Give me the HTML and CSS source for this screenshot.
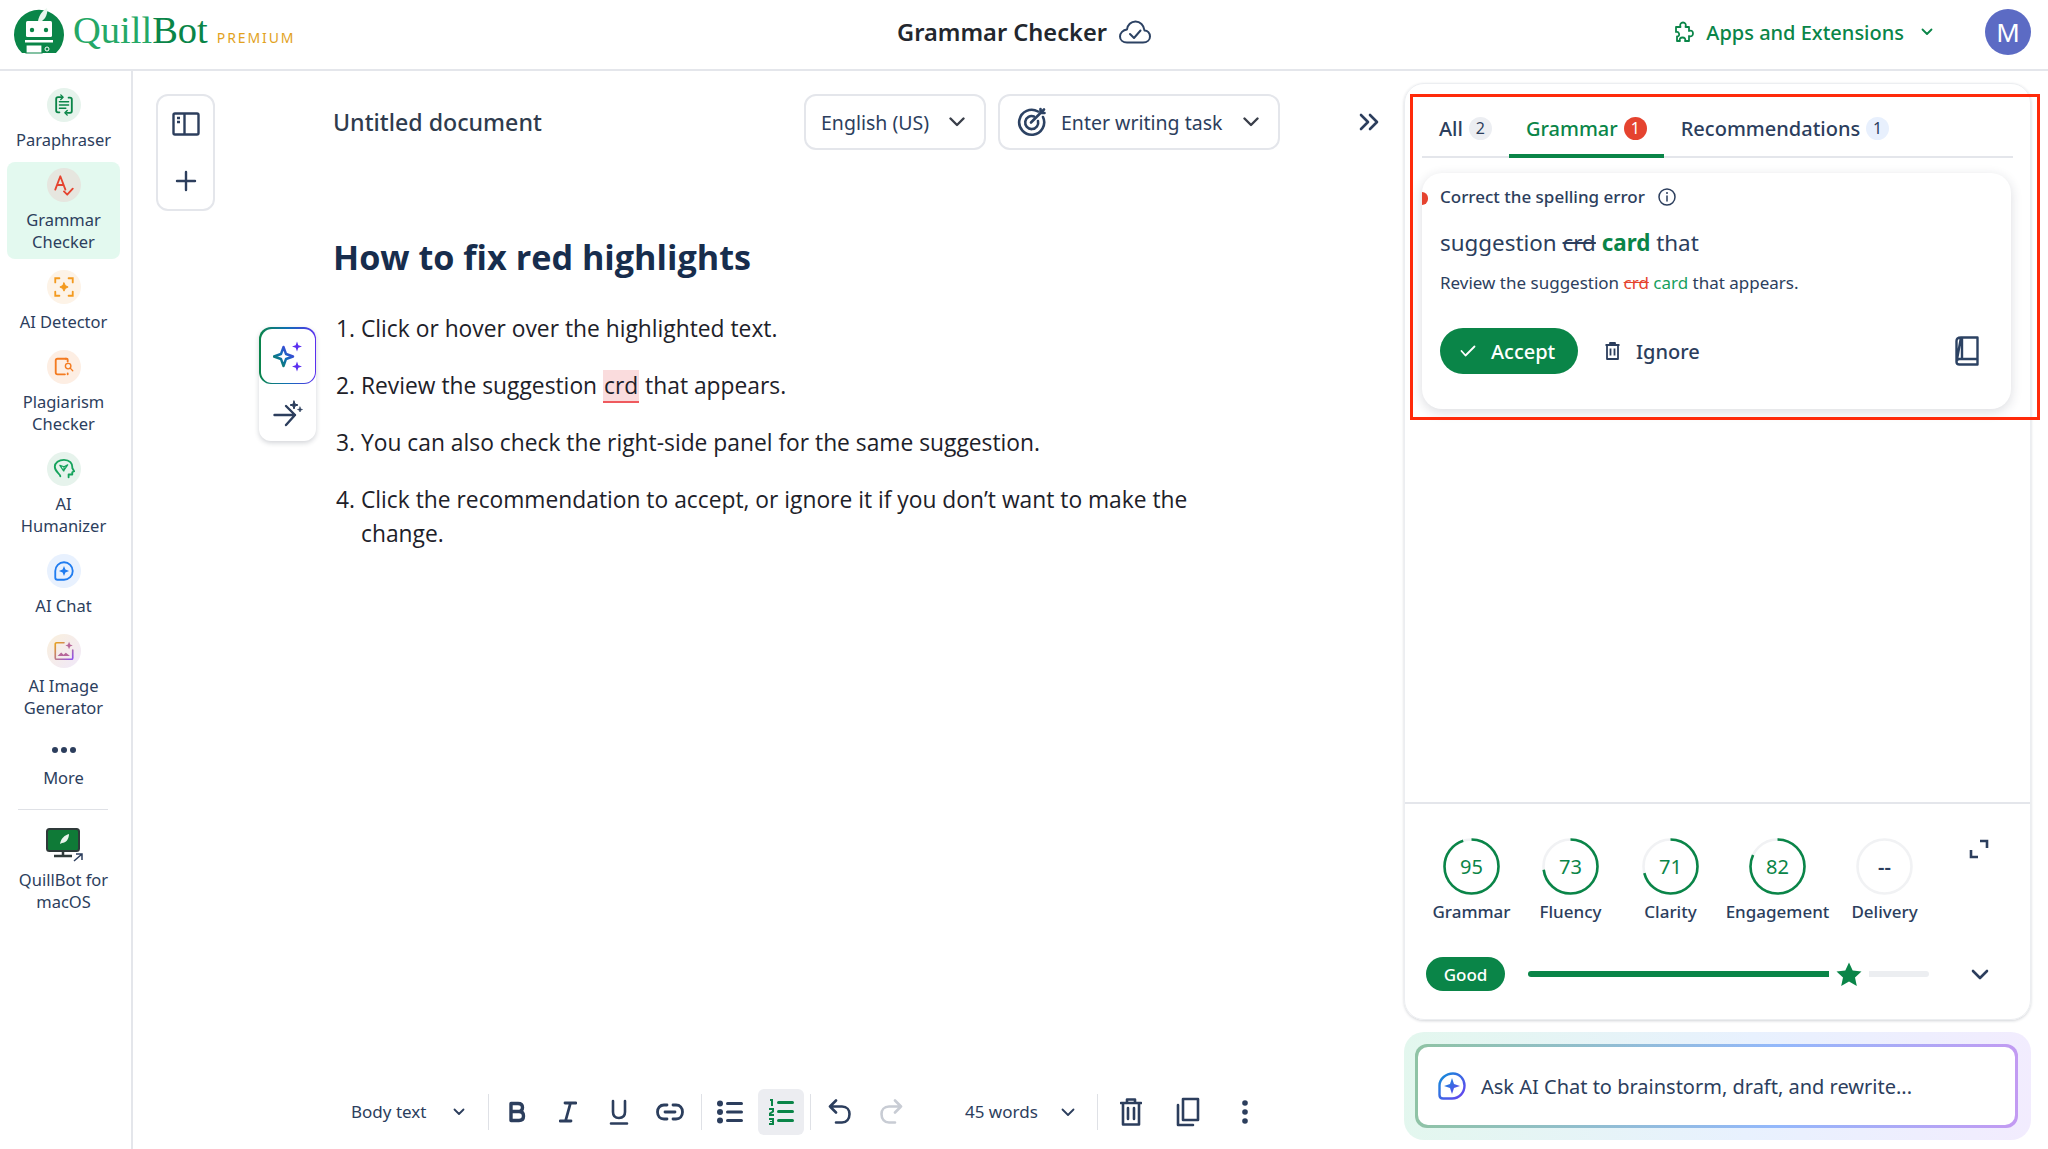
FILE: index.html
```html
<!DOCTYPE html>
<html lang="en">

<head>
    <meta charset="UTF-8">
    <meta name="viewport" content="width=device-width, initial-scale=1.0">
    <title>QuillBot Grammar Checker</title>
    <link rel="stylesheet" href="styles.css">
</head>

<body>
    <svg class="defs" width="0" height="0" aria-hidden="true">
        <defs>
            <linearGradient id="spark" x1="0" y1="1" x2="1" y2="0">
                <stop offset="0" stop-color="#0a8548" />
                <stop offset=".5" stop-color="#0f6fb5" />
                <stop offset="1" stop-color="#5b2ff0" />
            </linearGradient>
            <linearGradient id="imageGrad" x1="0" y1="0" x2="1" y2="1">
                <stop offset="0" stop-color="#e8a21c" />
                <stop offset="1" stop-color="#8f4ff0" />
            </linearGradient>
            <linearGradient id="chatGrad" x1="0" y1="0" x2="1" y2="1">
                <stop offset="0" stop-color="#0f8fd8" />
                <stop offset="1" stop-color="#6a3ff0" />
            </linearGradient>
        </defs>
    </svg>

    <!-- Header -->
    <header class="header">
        <div class="brand">
            <svg class="brand-mark" width="52" height="58" viewBox="0 0 52 58">
                <path d="M9 47A25 25 0 1 1 43 47Z" fill="#0a8548" />
                <path d="M25 15C26 9 30 4 34 2C35 7 33 12 29 15Z" fill="#e8f5ec" />
                <rect x="13" y="15" width="26" height="16" rx="1.500" fill="#fff" />
                <circle cx="19" cy="24" r="2.200" fill="#0a8548" />
                <circle cx="33" cy="24" r="2.200" fill="#0a8548" />
                <rect x="12" y="34" width="28" height="2.500" fill="#fff" />
                <path d="M13 39H29V47H13Z" fill="#fff" stroke="#0a8548" stroke-width="1.200" />
                <circle cx="34" cy="43" r="2" fill="#0a8548" stroke="#fff" stroke-width="1" />
            </svg>
            <span class="brand-name"><span class="brand-quill">Quill</span><span class="brand-bot">Bot</span></span>
            <span class="brand-tier">PREMIUM</span>
        </div>
        <div class="page-title">
            <span>Grammar Checker</span>
            <svg width="32" height="24" viewBox="0 0 32 24" fill="none" stroke="#2c4263" stroke-width="2" stroke-linecap="round" stroke-linejoin="round">
                <path d="M8 22.500H24C28 22.500 31 20 31 16.500C31 13 28.500 10.500 25.500 10.500C25 5 21 1.500 16.500 1.500C12 1.500 8.500 5 8 9.500C4 10 1 13 1 16.500C1 20 4 22.500 8 22.500Z" />
                <path d="M11 14L15 18L21.500 10.500" />
            </svg>
        </div>
        <div class="header-right">
            <a class="apps-link">
                <svg width="20" height="22" viewBox="0 0 20 22" fill="none" stroke="#0a8548" stroke-width="1.800" stroke-linejoin="round">
                    <path d="M2 6H6.500C5.500 3 7 1.500 9 1.500C11 1.500 12.500 3 11.500 6H15V10C18 9 19 10.500 19 12.500C19 14.500 17.500 16 15 15V20H11C12 17.500 10.500 16.500 8.500 16.500C6.500 16.500 5 17.500 6 20H3V15.500C5 15.500 5.500 14 5 12.500C4.500 11 3.500 10.500 2 11Z" />
                </svg>
                <span>Apps and Extensions</span>
                <svg class="apps-caret" width="12" height="8" viewBox="0 0 12 8" fill="none" stroke="#0a8548" stroke-width="1.800" stroke-linecap="round" stroke-linejoin="round">
                    <path d="M1.500 1.500L6 6L10.500 1.500" />
                </svg>
            </a>
            <div class="avatar">M</div>
        </div>
    </header>

    <div class="main">
        <!-- Sidebar -->
        <nav class="sidebar">
            <a class="nav-item">
                <span class="nav-icon tint-green">
                    <svg width="20" height="24" viewBox="0 0 20 24" fill="none" stroke="#0a8548" stroke-width="2" stroke-linecap="round" stroke-linejoin="round">
                        <path d="M7 3.500H3.500Q1.500 3.500 1.500 5.500V18Q1.500 20 3.500 20H5" />
                        <path d="M13 20.500H16.500Q18.500 20.500 18.500 18.500V6Q18.500 4 16.500 4H15" />
                        <path d="M5 8.500H15M5 12H15M5 15.500H12" stroke-width="1.500" />
                        <path d="M6.500 1L9 3.500L6.500 6M13.500 18L11 20.500L13.500 23" stroke-width="1.500" />
                    </svg>
                </span>
                <span class="nav-label">Paraphraser</span>
            </a>
            <a class="nav-item active">
                <span class="nav-icon tint-red">
                    <svg width="22" height="24" viewBox="0 0 22 24" fill="none" stroke="#e5432f" stroke-width="2" stroke-linecap="round" stroke-linejoin="round">
                        <path d="M1.500 17L7 2.500L12.500 17M3.500 12H10.500" />
                        <path d="M11 19L14.500 22.500L20.500 16" />
                    </svg>
                </span>
                <span class="nav-label">Grammar Checker</span>
            </a>
            <a class="nav-item">
                <span class="nav-icon tint-orange">
                    <svg width="22" height="22" viewBox="0 0 22 22" fill="none" stroke="#f39a1f" stroke-width="2" stroke-linecap="round">
                        <path d="M1.500 6V1.500H6M16 1.500H20.500V6M20.500 16V20.500H16M6 20.500H1.500V16" />
                        <path d="M11 6.500L12.500 9.500L15.500 11L12.500 12.500L11 15.500L9.500 12.500L6.500 11L9.500 9.500Z" fill="#f39a1f" stroke-width="1" />
                    </svg>
                </span>
                <span class="nav-label">AI Detector</span>
            </a>
            <a class="nav-item">
                <span class="nav-icon tint-peach">
                    <svg width="22" height="22" viewBox="0 0 22 22" fill="none" stroke="#f47b20" stroke-width="2" stroke-linecap="round" stroke-linejoin="round">
                        <path d="M13 2H4Q2 2 2 4V17Q2 19 4 19H12" />
                        <path d="M13 2H14Q15 2 15 3V5M15 18V19" />
                        <circle cx="15.500" cy="10" r="3" stroke-width="1.500" />
                        <path d="M18 12.500L20.500 15" stroke-width="1.500" />
                    </svg>
                </span>
                <span class="nav-label">Plagiarism Checker</span>
            </a>
            <a class="nav-item">
                <span class="nav-icon tint-green">
                    <svg width="24" height="24" viewBox="0 0 24 24" fill="none" stroke="#15a35c" stroke-width="2" stroke-linecap="round" stroke-linejoin="round">
                        <path d="M8 20C8 17 2 15 2 9.500C2 5 6.500 2 12 2C18 2 21.500 6 21 11L23 14.500L21 15.500V18H17V21" />
                        <path d="M7.500 8L12 9.500L16 7.500M7.500 8L11.500 14M16 7.500L11.500 14M12 9.500V14" stroke-width="1.300" />
                    </svg>
                </span>
                <span class="nav-label">AI Humanizer</span>
            </a>
            <a class="nav-item">
                <span class="nav-icon tint-blue">
                    <svg width="22" height="22" viewBox="0 0 22 22" fill="none">
                        <path d="M11 1.500C16.300 1.500 20.500 5.700 20.500 11C20.500 16.300 16.300 20.500 11 20.500H4Q1.500 20.500 1.500 18V11C1.500 5.700 5.700 1.500 11 1.500Z" stroke="#1f7cf0" stroke-width="2" />
                        <path d="M11 5.500L12.500 9.500L16.500 11L12.500 12.500L11 16.500L9.500 12.500L5.500 11L9.500 9.500Z" fill="#1f7cf0" />
                    </svg>
                </span>
                <span class="nav-label">AI Chat</span>
            </a>
            <a class="nav-item">
                <span class="nav-icon tint-image">
                    <svg width="22" height="22" viewBox="0 0 22 22" fill="none" stroke="url(#imageGrad)" stroke-width="1.800" stroke-linecap="round" stroke-linejoin="round">
                        <path d="M11 2H3Q1.500 2 1.500 3.500V18.500Q1.500 20 3 20H19Q20.500 20 20.500 18.500V10" />
                        <path d="M4 16.500L8 12.500L10.500 15L13 13L17.500 16.500Z" fill="#b7679a" stroke="none" />
                        <path d="M16.500 1L17.700 3.800L20.500 5L17.700 6.200L16.500 9L15.300 6.200L12.500 5L15.300 3.800Z" fill="#b7679a" stroke="none" />
                    </svg>
                </span>
                <span class="nav-label">AI Image Generator</span>
            </a>
            <a class="nav-item more">
                <span class="more-dots"><i></i><i></i><i></i></span>
                <span class="nav-label">More</span>
            </a>
            <div class="nav-divider"></div>
            <a class="nav-item desktop">
                <svg class="desktop-icon" width="38" height="34" viewBox="0 0 38 34" fill="none">
                    <rect x="1" y="1" width="32" height="22" rx="2.500" fill="#0f7a37" stroke="#2f3a3a" stroke-width="2" />
                    <path d="M14 16C15 10 19 7 23 6C23 11 20 15 16 15Z" fill="#e8f5ec" />
                    <path d="M8 28H26M17 23V28" stroke="#2f3a3a" stroke-width="2.500" />
                    <path d="M28 33L36 26M30 26H36V32" stroke="#2c3e5d" stroke-width="1.500" />
                </svg>
                <span class="nav-label">QuillBot for macOS</span>
            </a>
        </nav>

        <!-- Left rail -->
        <div class="rail">
            <button class="rail-btn">
                <svg width="28" height="24" viewBox="0 0 28 24" fill="none" stroke="#2c3e5d" stroke-width="2.400" stroke-linejoin="round">
                    <rect x="1.500" y="1.500" width="25" height="21" rx="1.500" />
                    <path d="M12.500 1.500V22.500" />
                    <path d="M5 6H8M5 10H8" stroke-width="2.400" />
                </svg>
            </button>
            <button class="rail-btn">
                <svg width="22" height="22" viewBox="0 0 22 22" fill="none" stroke="#2c3e5d" stroke-width="2.400" stroke-linecap="round">
                    <path d="M11 2V20M2 11H20" />
                </svg>
            </button>
        </div>

        <!-- Floating writing tools -->
        <div class="ai-tools">
            <div class="ai-tool-active">
                <div class="ai-tool-inner">
                    <svg width="30" height="32" viewBox="0 0 30 32" fill="none">
                        <path d="M10.500 7L13 14L20 16.500L13 19L10.500 26L8 19L1 16.500L8 14Z" stroke="url(#spark)" stroke-width="2.400" stroke-linejoin="round" />
                        <path d="M24 1.500L25.300 5.200L29 6.500L25.300 7.800L24 11.500L22.700 7.800L19 6.500L22.700 5.200Z" fill="#5b2ff0" />
                        <path d="M24 21.500L25.300 25.200L29 26.500L25.300 27.800L24 31.500L22.700 27.800L19 26.500L22.700 25.200Z" fill="#5b2ff0" />
                    </svg>
                </div>
            </div>
            <div class="ai-tool">
                <svg width="30" height="30" viewBox="0 0 30 30" fill="none" stroke="#2c3e5d" stroke-width="2.400" stroke-linecap="round" stroke-linejoin="round">
                    <path d="M1.500 17H22M13 8L22 17L13 27" />
                    <path d="M21 3L22 6L25 7L22 8L21 11L20 8L17 7L20 6Z" fill="#2c3e5d" stroke-width="1" />
                    <path d="M27 9L27.700 11L29.500 11.500L27.700 12.200L27 14L26.300 12.200L24.500 11.500L26.300 11Z" fill="#2c3e5d" stroke-width=".6" />
                </svg>
            </div>
        </div>

        <!-- Editor -->
        <main class="editor">
            <div class="editor-top">
                <div class="doc-name">Untitled document</div>
                <button class="select-box lang">
                    <span>English (US)</span>
                    <svg class="caret" width="16" height="10" viewBox="0 0 16 10" fill="none" stroke="#3a3f4a" stroke-width="2.400" stroke-linecap="round" stroke-linejoin="round">
                        <path d="M1.500 1.500L8 8L14.500 1.500" />
                    </svg>
                </button>
                <button class="select-box task">
                    <svg width="30" height="30" viewBox="0 0 30 30" fill="none" stroke="#2c4263" stroke-width="2.600" stroke-linecap="round">
                        <path d="M21 4.500A12.500 12.500 0 1 0 26 10" />
                        <path d="M17 9.500A6.500 6.500 0 1 0 21 14" />
                        <path d="M14 15.500L27 2.500M23.500 2V6L27.500 6" stroke-linejoin="round" />
                    </svg>
                    <span>Enter writing task</span>
                    <svg class="caret" width="16" height="10" viewBox="0 0 16 10" fill="none" stroke="#3a3f4a" stroke-width="2.400" stroke-linecap="round" stroke-linejoin="round">
                        <path d="M1.500 1.500L8 8L14.500 1.500" />
                    </svg>
                </button>
                <svg class="collapse" width="20" height="18" viewBox="0 0 20 18" fill="none" stroke="#2c3e5d" stroke-width="2.600" stroke-linecap="round" stroke-linejoin="round">
                    <path d="M2 2L9 9L2 16M11 2L18 9L11 16" />
                </svg>
            </div>

            <div class="doc">
                <h1>How to fix red highlights</h1>
                <ol>
                    <li>Click or hover over the highlighted text.</li>
                    <li>Review the suggestion <span class="flagged">crd</span> that appears.</li>
                    <li>You can also check the right-side panel for the same suggestion.</li>
                    <li>Click the recommendation to accept, or ignore it if you don’t want to make the change.</li>
                </ol>
            </div>

            <div class="toolbar">
                <div class="tb-select body-style">
                    <span>Body text</span>
                    <svg width="12" height="8" viewBox="0 0 12 8" fill="none" stroke="#2c3e5d" stroke-width="1.800" stroke-linecap="round" stroke-linejoin="round"><path d="M1.500 1.500L6 6L10.500 1.500" /></svg>
                </div>
                <div class="tb-sep"></div>
                <button class="tb-btn">
                    <svg width="18" height="22" viewBox="0 0 18 22" fill="none" stroke="#2c3e5d" stroke-width="3.400" stroke-linejoin="round"><path d="M3 2.500H10C13 2.500 14.500 4 14.500 6.500C14.500 9 13 10.500 10 10.500H3ZM3 10.500H11C14 10.500 15.500 12.500 15.500 15C15.500 17.500 14 19.500 11 19.500H3Z" /></svg>
                </button>
                <button class="tb-btn">
                    <svg width="18" height="22" viewBox="0 0 18 22" fill="none" stroke="#2c3e5d" stroke-width="2.800" stroke-linecap="round"><path d="M6 2H17M1 20H12M11.500 2L6.500 20" /></svg>
                </button>
                <button class="tb-btn">
                    <svg width="20" height="26" viewBox="0 0 20 26" fill="none" stroke="#2c3e5d" stroke-width="2.600" stroke-linecap="round"><path d="M4 2V13C4 17 6.500 19 10 19C13.500 19 16 17 16 13V2M2 24.500H18" /></svg>
                </button>
                <button class="tb-btn">
                    <svg width="28" height="18" viewBox="0 0 28 18" fill="none" stroke="#2c3e5d" stroke-width="2.800" stroke-linecap="round"><path d="M11 2H8C4 2 1.500 5 1.500 9C1.500 13 4 16 8 16H11M17 2H20C24 2 26.500 5 26.500 9C26.500 13 24 16 20 16H17M9 9H19" /></svg>
                </button>
                <div class="tb-sep sep-b"></div>
                <button class="tb-btn">
                    <svg width="26" height="24" viewBox="0 0 26 24" fill="#2c3e5d"><circle cx="3" cy="3.500" r="3" /><circle cx="3" cy="12" r="3" /><circle cx="3" cy="20.500" r="3" /><rect x="9" y="2" width="17" height="3" rx="1.500" /><rect x="9" y="10.500" width="17" height="3" rx="1.500" /><rect x="9" y="19" width="17" height="3" rx="1.500" /></svg>
                </button>
                <button class="tb-btn on">
                    <svg width="26" height="28" viewBox="0 0 26 28" fill="#0a8548"><rect x="9" y="3" width="17" height="3" rx="1.500" /><rect x="9" y="12" width="17" height="3" rx="1.500" /><rect x="9" y="21" width="17" height="3" rx="1.500" /><path d="M2 1H5V8H3V3H2ZM1 10H6V14L3 16H6V18H1V15L4 13V12H1ZM1 20H6V27H1V25H4V24H2V23H4V22H1Z" /></svg>
                </button>
                <div class="tb-sep sep-c"></div>
                <button class="tb-btn">
                    <svg width="24" height="26" viewBox="0 0 24 26" fill="none" stroke="#2c3e5d" stroke-width="2.600" stroke-linecap="round" stroke-linejoin="round"><path d="M8 1.500L2 7.500L8 13.500M2 7.500H14C19 7.500 21.500 11 21.500 15C21.500 20 18.500 23.500 14 23.500H8" /></svg>
                </button>
                <button class="tb-btn">
                    <svg width="24" height="26" viewBox="0 0 24 26" fill="none" stroke="#c8ccd4" stroke-width="2.600" stroke-linecap="round" stroke-linejoin="round"><path d="M16 1.500L22 7.500L16 13.500M22 7.500H10C5 7.500 2.500 11 2.500 15C2.500 20 5.500 23.500 10 23.500H16" /></svg>
                </button>
                <div class="tb-select word-count">
                    <span>45 words</span>
                    <svg width="14" height="9" viewBox="0 0 14 9" fill="none" stroke="#2c3e5d" stroke-width="1.800" stroke-linecap="round" stroke-linejoin="round"><path d="M1.500 1.500L7 7L12.500 1.500" /></svg>
                </div>
                <div class="tb-sep sep-d"></div>
                <div class="tb-end">
                    <button class="tb-btn">
                        <svg width="22" height="28" viewBox="0 0 22 28" fill="none" stroke="#2c3e5d" stroke-width="2.600" stroke-linecap="round" stroke-linejoin="round"><path d="M1 5H21M7 4V1.500H15V4M3 5V26.500H19V5M8 10V21M14 10V21" /></svg>
                    </button>
                    <button class="tb-btn">
                        <svg width="24" height="30" viewBox="0 0 24 30" fill="none" stroke="#2c3e5d" stroke-width="2.600" stroke-linecap="round" stroke-linejoin="round"><path d="M7 2H22V23H7ZM2 8V28H17" /></svg>
                    </button>
                    <button class="tb-btn">
                        <svg width="6" height="24" viewBox="0 0 6 24" fill="#2c3e5d"><circle cx="3" cy="3" r="2.800" /><circle cx="3" cy="12" r="2.800" /><circle cx="3" cy="21" r="2.800" /></svg>
                    </button>
                </div>
            </div>
        </main>

        <!-- Right panel -->
        <aside class="panel">
            <div class="panel-card">
                <div class="tabs">
                    <div class="tab"><span>All</span><span class="count grey">2</span></div>
                    <div class="tab selected"><span>Grammar</span><span class="count red">1</span></div>
                    <div class="tab"><span>Recommendations</span><span class="count pale">1</span></div>
                </div>

                <div class="suggestion">
                    <i class="suggestion-dot"></i>
                    <div class="suggestion-head">
                        <span>Correct the spelling error</span>
                        <svg width="18" height="18" viewBox="0 0 18 18" fill="none" stroke="#2c3e5d" stroke-width="1.500" stroke-linecap="round"><circle cx="9" cy="9" r="8" /><path d="M9 8V13" /><path d="M9 5V5.100" stroke-width="2" /></svg>
                    </div>
                    <div class="suggestion-text">suggestion <s>crd</s> <b>card</b> that</div>
                    <div class="suggestion-note">Review the suggestion <s>crd</s> <span>card</span> that appears.</div>
                    <div class="suggestion-actions">
                        <button class="accept">
                            <svg width="16" height="12" viewBox="0 0 16 12" fill="none" stroke="#fff" stroke-width="1.800" stroke-linecap="round" stroke-linejoin="round"><path d="M1.500 6L5.500 10.500L14.500 1.500" /></svg>
                            <span>Accept</span>
                        </button>
                        <button class="ignore">
                            <svg width="15" height="18" viewBox="0 0 15 18" fill="none" stroke="#2c3e5d" stroke-width="1.800" stroke-linejoin="round"><path d="M.5 3H14.500M5 3V1H10V3M2 3V17H13V3M5.500 6.500V13.500M9.500 6.500V13.500" /></svg>
                            <span>Ignore</span>
                        </button>
                        <svg class="book" width="24" height="30" viewBox="0 0 24 30" fill="none" stroke="#2c4263" stroke-width="2.400" stroke-linejoin="round"><path d="M6 1.500H22.500V23H4.500C2.500 23 1.500 24.500 1.500 26C1.500 27.500 2.500 28.500 4.500 28.500H22.500V23M1.500 26V5C1.500 3 3 1.500 6 1.500ZM7 1.500V23" /></svg>
                    </div>
                </div>

                <div class="score-area">
                    <div class="score-top">
                        <div class="scores">
                            <div class="score">
                                <div class="ring">
                                    <svg width="57" height="57" viewBox="0 0 57 57" fill="none" stroke-width="2.600"><circle class="ring-base" cx="28.500" cy="28.500" r="27" /><circle class="ring-fill" cx="28.500" cy="28.500" r="27" pathLength="100" stroke-dasharray="95 100" /></svg>
                                    <span>95</span>
                                </div>
                                <div class="score-label">Grammar</div>
                            </div>
                            <div class="score">
                                <div class="ring">
                                    <svg width="57" height="57" viewBox="0 0 57 57" fill="none" stroke-width="2.600"><circle class="ring-base" cx="28.500" cy="28.500" r="27" /><circle class="ring-fill" cx="28.500" cy="28.500" r="27" pathLength="100" stroke-dasharray="73 100" /></svg>
                                    <span>73</span>
                                </div>
                                <div class="score-label">Fluency</div>
                            </div>
                            <div class="score">
                                <div class="ring">
                                    <svg width="57" height="57" viewBox="0 0 57 57" fill="none" stroke-width="2.600"><circle class="ring-base" cx="28.500" cy="28.500" r="27" /><circle class="ring-fill" cx="28.500" cy="28.500" r="27" pathLength="100" stroke-dasharray="71 100" /></svg>
                                    <span>71</span>
                                </div>
                                <div class="score-label">Clarity</div>
                            </div>
                            <div class="score">
                                <div class="ring">
                                    <svg width="57" height="57" viewBox="0 0 57 57" fill="none" stroke-width="2.600"><circle class="ring-base" cx="28.500" cy="28.500" r="27" /><circle class="ring-fill" cx="28.500" cy="28.500" r="27" pathLength="100" stroke-dasharray="82 100" /></svg>
                                    <span>82</span>
                                </div>
                                <div class="score-label">Engagement</div>
                            </div>
                            <div class="score">
                                <div class="ring empty">
                                    <svg width="57" height="57" viewBox="0 0 57 57" fill="none" stroke-width="2.600"><circle class="ring-base" cx="28.500" cy="28.500" r="27" /></svg>
                                    <span>--</span>
                                </div>
                                <div class="score-label">Delivery</div>
                            </div>
                        </div>
                        <svg class="expand" width="20" height="20" viewBox="0 0 20 20" fill="none" stroke="#2c3e5d" stroke-width="2.600"><path d="M11 2H18V9M2 11V18H9" /></svg>
                    </div>
                    <div class="overall">
                        <span class="overall-pill">Good</span>
                        <div class="overall-bar"><i></i></div>
                        <svg class="overall-star" width="26" height="24" viewBox="0 0 26 24" fill="#0a8548"><path d="M13 .5L16.700 8.500L25.500 9.500L19 15.400L20.800 24L13 19.600L5.200 24L7 15.400L.5 9.500L9.300 8.500Z" /></svg>
                        <div class="overall-rest"></div>
                        <svg class="overall-caret" width="18" height="11" viewBox="0 0 18 11" fill="none" stroke="#2c3e5d" stroke-width="2.600" stroke-linecap="round" stroke-linejoin="round"><path d="M2 2L9 9L16 2" /></svg>
                    </div>
                </div>
            </div>

            <div class="chat-wrap">
                <div class="chat-box">
                    <div class="chat-inner">
                        <svg width="28" height="28" viewBox="0 0 28 28" fill="none">
                            <path d="M15 1.500C21.500 1.500 26.500 6.800 26.500 13.500C26.500 20.500 21.500 26.500 14 26.500H5Q1.500 26.500 1.500 23V13.500C1.500 6.800 8 1.500 15 1.500Z" stroke="url(#chatGrad)" stroke-width="2.400" />
                            <path d="M14 6L16 12L22 14L16 16L14 22L12 16L6 14L12 12Z" fill="url(#chatGrad)" />
                        </svg>
                        <span>Ask AI Chat to brainstorm, draft, and rewrite...</span>
                    </div>
                </div>
            </div>

            <!-- screenshot annotation -->
            <div class="callout"></div>
        </aside>
    </div>
</body>

</html>
```

FILE: styles.css
```css
/* General Styling */
* {
    box-sizing: border-box;
}

body {
    font-family: "Noto Sans", "Open Sans", Arial, sans-serif;
    background-color: #fff;
    color: #2c3e5d;
    margin: 0;
    height: 100vh;
    overflow: hidden;
    display: flex;
    flex-direction: column;
}

button {
    font-family: inherit;
    background: none;
    border: none;
    padding: 0;
    color: inherit;
}

svg {
    flex-shrink: 0;
    display: block;
}

.defs {
    position: absolute;
}

/* Header */
.header {
    height: 71px;
    flex-shrink: 0;
    padding-bottom: 5px;
    display: grid;
    grid-template-columns: 1fr auto 1fr;
    align-items: center;
    border-bottom: 2px solid #e4e6eb;
}

.brand {
    display: flex;
    align-items: center;
    padding-left: 13px;
}

.brand-mark {
    margin-top: 5px;
}

.brand-name {
    font-family: "Liberation Serif", serif;
    font-size: 38.500px;
    margin-left: 8px;
    line-height: 1;
    margin-top: -3px;
}

.brand-quill {
    color: #24a866;
}

.brand-bot {
    color: #0a8548;
}

.brand-tier {
    color: #e2a21d;
    font-size: 14px;
    letter-spacing: 1.900px;
    margin-left: 9px;
    margin-top: 10px;
}

.page-title {
    display: flex;
    align-items: center;
    gap: 12px;
    font-size: 23.600px;
    font-weight: 600;
    color: #23272e;
}

.header-right {
    display: flex;
    align-items: center;
    justify-content: flex-end;
    padding-right: 17px;
}

.apps-link {
    display: flex;
    align-items: center;
    color: #0a8548;
    font-size: 20px;
    font-weight: 500;
}

.apps-link span {
    margin-left: 12px;
}

.apps-caret {
    margin-left: 17px;
}

.avatar {
    width: 46px;
    height: 46px;
    border-radius: 50%;
    background-color: #5c6bc4;
    color: #fff;
    font-size: 26px;
    display: flex;
    align-items: center;
    justify-content: center;
    margin-left: 52px;
}

/* Layout */
.main {
    flex: 1;
    display: flex;
    min-height: 0;
    position: relative;
}

/* Sidebar */
.sidebar {
    width: 133px;
    flex-shrink: 0;
    border-right: 2px solid #e4e6eb;
    padding: 11px 11px 0 7px;
    display: flex;
    flex-direction: column;
    gap: 5px;
}

.nav-item {
    display: flex;
    flex-direction: column;
    align-items: center;
    gap: 7px;
    padding: 6px 0;
    border-radius: 8px;
}

.nav-item.active {
    background-color: #e3f9ef;
}

.nav-icon {
    width: 34px;
    height: 34px;
    border-radius: 50%;
    display: flex;
    align-items: center;
    justify-content: center;
}

.nav-icon svg {
    transform: scale(.92);
}

.tint-green { background-color: #e6f3ec; }
.tint-red { background-color: #e6e6df; }
.tint-orange { background-color: #fdf3e7; }
.tint-peach { background-color: #fdeee3; }
.tint-blue { background-color: #e8f1fe; }
.tint-image { background: linear-gradient(135deg, #faf0dc, #f0e8fa); }

.nav-label {
    font-size: 16.500px;
    line-height: 22px;
    text-align: center;
    color: #2c3e5d;
    width: 100px;
}

.more {
    gap: 5px;
    margin-top: 2px;
}

.more-dots {
    height: 24px;
    display: flex;
    align-items: center;
    gap: 3px;
}

.more-dots i {
    width: 6px;
    height: 6px;
    border-radius: 50%;
    background-color: #2c3e5d;
}

.nav-divider {
    height: 1px;
    background-color: #dfe1e6;
    margin: 9px 12px 0 11px;
}

.desktop {
    margin-top: 7px;
    gap: 7px;
    padding-top: 6px;
}

.desktop-icon {
    margin-left: 3px;
}

/* Left rail */
.rail {
    width: 59px;
    height: 117px;
    flex-shrink: 0;
    margin: 23px 0 0 23px;
    border: 2px solid #e4e6eb;
    border-radius: 12px;
    display: flex;
    flex-direction: column;
    justify-content: space-around;
    align-items: center;
}

.rail-btn {
    height: 44px;
    display: flex;
    align-items: center;
}

/* Floating AI tools */
.ai-tools {
    width: 57px;
    height: 114px;
    flex-shrink: 0;
    margin: 256px 0 0 44px;
    border-radius: 12px;
    box-shadow: 0 2px 5px rgba(30, 40, 60, 0.2);
    background-color: #fff;
}

.ai-tool-active {
    height: 57px;
    border-radius: 12px;
    padding: 1.500px;
    background: linear-gradient(90deg, #0a8548, #0f6fb5 50%, #5b2ff0);
}

.ai-tool-inner {
    height: 100%;
    border-radius: 11px;
    background-color: #fff;
    display: flex;
    align-items: center;
    justify-content: center;
}

.ai-tool {
    height: 57px;
    display: flex;
    align-items: center;
    justify-content: center;
}

/* Editor */
.editor {
    flex: 1;
    min-width: 0;
    margin-left: 17px;
    display: flex;
    flex-direction: column;
}

.editor-top {
    margin-top: 23px;
    height: 56px;
    display: flex;
    align-items: center;
}

.doc-name {
    flex: 1;
    font-size: 23.200px;
    font-weight: 500;
    color: #2f3b4d;
}

.select-box {
    height: 56px;
    border: 2px solid #e4e6eb;
    border-radius: 12px;
    display: flex;
    align-items: center;
    justify-content: space-between;
    font-size: 19.500px;
    color: #2c3e5d;
}

.lang {
    width: 182px;
    padding: 0 19px 0 15px;
}

.task {
    width: 282px;
    margin-left: 12px;
    padding: 0 19px 0 17px;
}

.task span {
    flex: 1;
    text-align: left;
    margin-left: 14px;
}

.collapse {
    margin: 0 11px 0 79px;
}

.doc {
    flex: 1;
    min-height: 0;
    font-family: "Open Sans", "Noto Sans", Arial, sans-serif;
}

.doc h1 {
    margin: 84px 0 0;
    font-size: 34.200px;
    line-height: 46px;
    font-weight: 700;
    color: #172d4d;
}

.doc ol {
    margin: 32px 0 0;
    padding-left: 28px;
    max-width: 900px;
    font-size: 22.800px;
    line-height: 34px;
    color: #1d2129;
}

.doc li {
    margin-bottom: 23px;
    padding-left: 0;
}

.flagged {
    background-color: #fadcdd;
    border-bottom: 2px solid #ef5a5e;
    padding: 0 1px;
}

/* Bottom toolbar */
.toolbar {
    height: 46px;
    margin-bottom: 14px;
    padding-left: 18px;
    display: flex;
    align-items: center;
    flex-shrink: 0;
}

.tb-select {
    display: flex;
    align-items: center;
    justify-content: space-between;
    font-size: 17px;
    color: #2c3e5d;
}

.tb-select span {
    margin-top: -2px;
}

.body-style {
    width: 114px;
}

.word-count {
    width: 110px;
    margin-left: 46px;
}

.tb-sep {
    width: 1px;
    height: 36px;
    background-color: #dfe1e6;
    margin: 0 5px 0 23px;
}

.sep-b {
    margin-left: 3px;
}

.sep-c {
    margin-left: 1px;
    margin-right: 6px;
}

.sep-d {
    margin-left: 22px;
    margin-right: 10px;
}

.tb-btn {
    width: 46px;
    height: 46px;
    margin-right: 5px;
    border-radius: 6px;
    display: flex;
    align-items: center;
    justify-content: center;
}

.tb-btn.on {
    background-color: #ecedf1;
}

.tb-end {
    display: flex;
    gap: 6px;
}

/* Right panel */
.panel {
    width: 627px;
    flex-shrink: 0;
    margin: 12px 17px 9px 14px;
    display: flex;
    flex-direction: column;
    gap: 12px;
    position: relative;
}

.panel-card {
    flex: 1;
    min-height: 0;
    border: 1px solid #eceef1;
    border-radius: 20px;
    box-shadow: 0 1px 3px rgba(30, 40, 60, 0.2);
    padding-top: 21px;
    display: flex;
    flex-direction: column;
}

.tabs {
    height: 53px;
    margin: 0 17px;
    display: flex;
    border-bottom: 2px solid #e4e6eb;
}

.tab {
    display: flex;
    align-items: flex-start;
    gap: 6px;
    padding: 0 17px;
    font-size: 20px;
    line-height: 27px;
    font-weight: 500;
    color: #2c3e5d;
    padding-top: 10px;
    margin-bottom: -2px;
}

.tab.selected {
    color: #0a8548;
    border-bottom: 4px solid #0a8548;
}

.count {
    width: 23px;
    height: 23px;
    margin-top: 2px;
    border-radius: 50%;
    font-size: 16px;
    line-height: 23px;
    text-align: center;
    font-weight: 400;
}

.count.grey {
    background-color: #eceef2;
}

.count.red {
    background-color: #e5432f;
    color: #fff;
}

.count.pale {
    background-color: #e8f0fd;
}

.suggestion {
    position: relative;
    height: 236px;
    margin: 15px 19px 0 17px;
    padding: 13px 18px 0;
    border-radius: 20px;
    box-shadow: 0 3px 12px rgba(30, 40, 60, 0.16);
}

.suggestion-dot {
    position: absolute;
    left: 0;
    top: 19px;
    width: 6px;
    height: 13px;
    background-color: #e5432f;
    border-radius: 0 7px 7px 0;
}

.suggestion-head {
    display: flex;
    align-items: center;
    gap: 13px;
    font-size: 17px;
    line-height: 22px;
    font-weight: 500;
    color: #2c3e5d;
}

.suggestion-text {
    margin-top: 20px;
    font-size: 22.400px;
    line-height: 30px;
    color: #2c3e5d;
}

.suggestion-text b {
    color: #0a8548;
    font-weight: 700;
}

.suggestion-note {
    margin-top: 14px;
    font-size: 17px;
    line-height: 22px;
    color: #2c3e5d;
}

.suggestion-note s {
    color: #e5432f;
}

.suggestion-note span {
    color: #17a05d;
}

.suggestion-actions {
    margin-top: 34px;
    display: flex;
    align-items: center;
}

.accept {
    width: 138px;
    height: 46px;
    border-radius: 23px;
    background-color: #0a8548;
    color: #fff;
    font-size: 20px;
    font-weight: 500;
    display: flex;
    align-items: center;
    gap: 15px;
    padding-left: 20px;
}

.ignore {
    margin-left: 27px;
    display: flex;
    align-items: center;
    gap: 16px;
    font-size: 20px;
    font-weight: 500;
    color: #2c3e5d;
}

.book {
    margin-left: auto;
    margin-right: 14px;
}

/* Scores */
.score-area {
    margin-top: auto;
    height: 217px;
    border-top: 2px solid #e4e6eb;
    padding: 34px 41px 0 17px;
}

.score-top {
    display: flex;
    justify-content: space-between;
    align-items: flex-start;
}

.scores {
    display: grid;
    grid-template-columns: 99px 99px 101px 113px 101px;
}

.score {
    display: flex;
    flex-direction: column;
    align-items: center;
    gap: 6px;
}

.ring {
    display: grid;
    place-items: center;
    color: #0a8548;
    font-size: 20px;
}

.ring > * {
    grid-area: 1 / 1;
}

.ring.empty {
    color: #2c3e5d;
    font-weight: 600;
}

.ring-base {
    stroke: #f1f2f4;
}

.ring-fill {
    stroke: #0a8548;
    transform: rotate(-90deg);
    transform-origin: center;
}

.score-label {
    font-size: 17px;
    line-height: 22px;
    font-weight: 500;
    color: #2c3e5d;
    white-space: nowrap;
}

.expand {
    margin-top: 1px;
}

.overall {
    display: flex;
    align-items: center;
    margin: 34px 0 0 4px;
}

.overall-pill {
    width: 79px;
    height: 34px;
    border-radius: 17px;
    background-color: #0a8548;
    color: #fff;
    font-size: 17px;
    font-weight: 500;
    display: flex;
    align-items: center;
    justify-content: center;
}

.overall-bar {
    width: 301px;
    height: 6px;
    margin-left: 23px;
    border-radius: 3px 0 0 3px;
    background-color: #0a8548;
}

.overall-star {
    margin: 0 7px;
}

.overall-rest {
    width: 60px;
    height: 6px;
    border-radius: 0 3px 3px 0;
    background-color: #eceef1;
}

.overall-caret {
    margin-left: auto;
}

/* AI chat box */
.chat-wrap {
    height: 108px;
    flex-shrink: 0;
    border-radius: 20px;
    padding: 12px 13px 12px 11px;
    background: linear-gradient(95deg, #e3f7ee, #e8f1fe 55%, #f2ecfe);
}

.chat-box {
    height: 100%;
    border-radius: 12px;
    padding: 3px;
    background: linear-gradient(95deg, #8fc3a4, #93b8fb 60%, #c39af2);
}

.chat-inner {
    height: 100%;
    border-radius: 10px;
    background-color: #fff;
    display: flex;
    align-items: center;
    gap: 15px;
    padding-left: 20px;
    font-size: 20px;
    color: #2c3e5d;
}

/* Red annotation box */
.callout {
    position: absolute;
    left: 6px;
    top: 11px;
    width: 630px;
    height: 326px;
    border: 3px solid #ff2a0a;
    pointer-events: none;
}
```
